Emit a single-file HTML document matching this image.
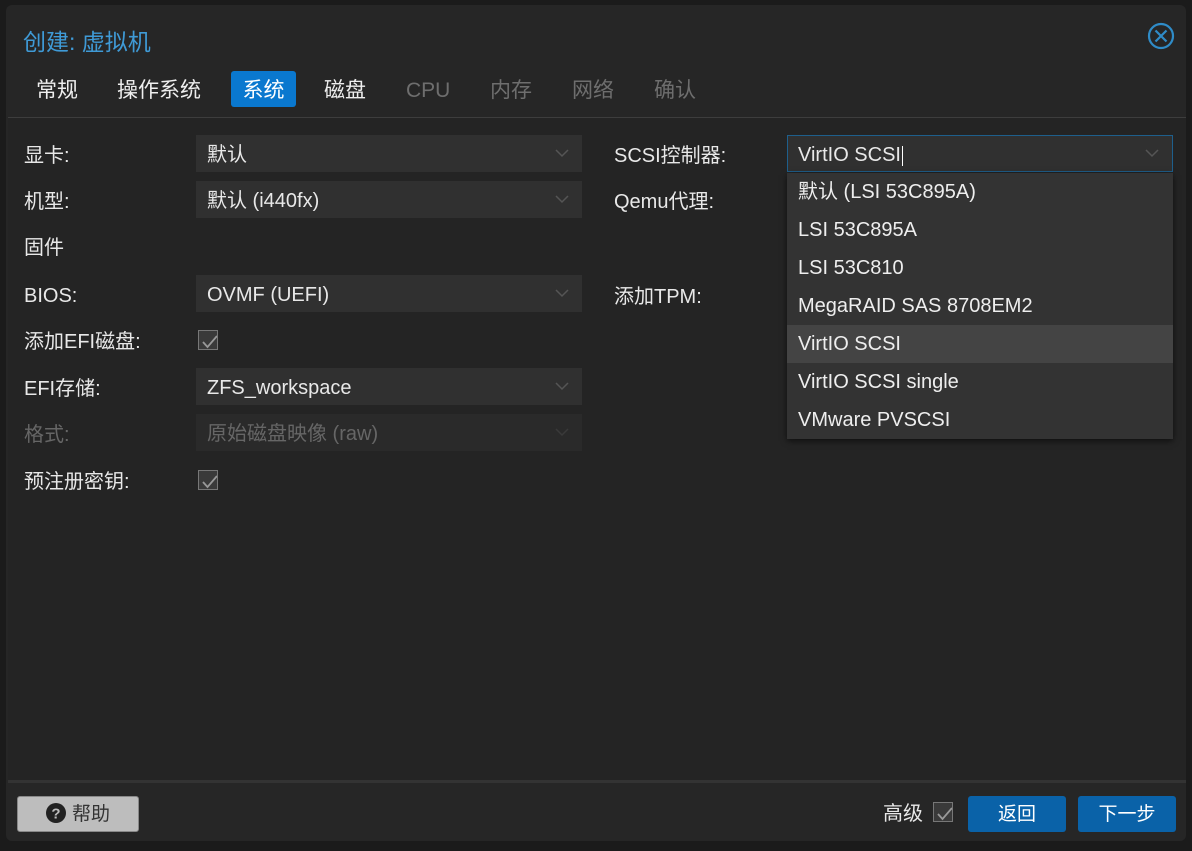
<!DOCTYPE html>
<html><head><meta charset="utf-8"><style>
*{margin:0;padding:0;box-sizing:border-box}
body{width:1192px;height:851px;background:#1b1b1b;font-family:"Liberation Sans","Noto Sans CJK SC",sans-serif;color:#e8e8e8;position:relative;overflow:hidden;font-size:20px}
.dlg{position:absolute;left:6px;top:5px;width:1180px;height:836px;background:#262626;border-radius:6px}
.title{position:absolute;left:17px;top:18px;font-size:23px;color:#3f9ad6}
.close{position:absolute;left:1141px;top:17px}
.tab{position:absolute;top:68px;height:36px;line-height:36px;font-size:21px;color:#eee;padding:0 6px}
.tab.sel{background:#0a78cf;border-radius:3px;color:#fff;top:66px;line-height:40px}
.tab.dis{color:#6e6e6e}
.body{position:absolute;left:2px;top:112px;width:1178px;height:666px;background:#242424;border-top:1px solid #3d3d3d;border-bottom:3px solid #333}
.lbl{position:absolute;font-size:20px;color:#e8e8e8;line-height:24px;top:0}
.inp{position:absolute;height:37px;background:#303030;line-height:40px;padding-left:11px;font-size:20px;color:#e8e8e8}
.inp .ar{position:absolute;right:12px;top:8px}
.chk{position:absolute;width:20px;height:20px;border:1px solid #777;background:#3a3a3a}
.dd{position:absolute;left:787px;top:173px;width:386px;height:266px;background:#333;box-shadow:0 2px 6px rgba(0,0,0,.6)}
.dd div{height:38px;line-height:38px;padding-left:11px;font-size:20px;color:#eee}
.btn{position:absolute;top:796px;height:36px;line-height:36px;text-align:center;font-size:19px;border-radius:3px}
</style></head><body>
<div class="dlg">
<div class="title">创建: 虚拟机</div>
<svg class="close" width="28" height="28" viewBox="0 0 28 28"><circle cx="14" cy="14" r="12" fill="none" stroke="#2f8cc8" stroke-width="2.2"/><path d="M8.5 8.5L19.5 19.5M19.5 8.5L8.5 19.5" stroke="#2f8cc8" stroke-width="2.2"/></svg>
<div class="tab" style="left:24px">常规</div>
<div class="tab" style="left:105px">操作系统</div>
<div class="tab sel" style="left:225px;width:65px;text-align:center">系统</div>
<div class="tab" style="left:312px">磁盘</div>
<div class="tab dis" style="left:394px">CPU</div>
<div class="tab dis" style="left:478px">内存</div>
<div class="tab dis" style="left:560px">网络</div>
<div class="tab dis" style="left:642px">确认</div>
<div class="body"></div>
</div>
<div class="lbl" style="left:24px;top:144px">显卡:</div>
<div class="inp" style="left:196px;top:135px;width:386px">默认<svg class="ar" width="16" height="20"><path d="M2 7l6 6 6-6" fill="none" stroke="#555" stroke-width="1.5"/></svg></div>
<div class="lbl" style="left:24px;top:190px">机型:</div>
<div class="inp" style="left:196px;top:181px;width:386px">默认 (i440fx)<svg class="ar" width="16" height="20"><path d="M2 7l6 6 6-6" fill="none" stroke="#555" stroke-width="1.5"/></svg></div>
<div class="lbl" style="left:24px;top:236px">固件</div>
<div class="lbl" style="left:24px;top:284px">BIOS:</div>
<div class="inp" style="left:196px;top:275px;width:386px">OVMF (UEFI)<svg class="ar" width="16" height="20"><path d="M2 7l6 6 6-6" fill="none" stroke="#555" stroke-width="1.5"/></svg></div>
<div class="lbl" style="left:24px;top:330px">添加EFI磁盘:</div>
<svg class="chk" style="left:198px;top:330px" width="22" height="22"><path d="M4 11l4.5 5L18 5" fill="none" stroke="#999" stroke-width="1.8"/></svg>
<div class="lbl" style="left:24px;top:377px">EFI存储:</div>
<div class="inp" style="left:196px;top:368px;width:386px">ZFS_workspace<svg class="ar" width="16" height="20"><path d="M2 7l6 6 6-6" fill="none" stroke="#555" stroke-width="1.5"/></svg></div>
<div class="lbl" style="left:24px;top:423px;color:#666">格式:</div>
<div class="inp" style="left:196px;top:414px;width:386px;background:#2a2a2a;color:#666">原始磁盘映像 (raw)<svg class="ar" width="16" height="20"><path d="M2 7l6 6 6-6" fill="none" stroke="#3a3a3a" stroke-width="1.5"/></svg></div>
<div class="lbl" style="left:24px;top:470px">预注册密钥:</div>
<svg class="chk" style="left:198px;top:470px" width="22" height="22"><path d="M4 11l4.5 5L18 5" fill="none" stroke="#999" stroke-width="1.8"/></svg>

<div class="lbl" style="left:614px;top:144px">SCSI控制器:</div>
<div class="inp" style="left:787px;top:135px;width:386px;border:1px solid #1e5f8c;line-height:38px;padding-left:10px">VirtIO SCSI<span style="border-left:1.5px solid #fff;margin-left:1px;height:20px;display:inline-block;vertical-align:middle"></span><svg class="ar" width="16" height="20" style="top:7px"><path d="M2 7l6 6 6-6" fill="none" stroke="#555" stroke-width="1.5"/></svg></div>
<div class="lbl" style="left:614px;top:190px">Qemu代理:</div>
<div class="lbl" style="left:614px;top:285px">添加TPM:</div>
<div class="dd">
<div>默认 (LSI 53C895A)</div><div>LSI 53C895A</div><div>LSI 53C810</div><div>MegaRAID SAS 8708EM2</div><div style="background:#444">VirtIO SCSI</div><div>VirtIO SCSI single</div><div>VMware PVSCSI</div>
</div>

<div class="btn" style="left:17px;width:122px;background:#bdbdbd;color:#333;border:1px solid #888">
<svg width="20" height="20" style="vertical-align:-3px;margin-right:6px"><circle cx="10" cy="10" r="10" fill="#222"/><text x="10" y="15.5" font-size="15" font-weight="bold" fill="#bdbdbd" text-anchor="middle" font-family="Liberation Sans">?</text></svg>帮助</div>
<div class="lbl" style="left:883px;top:802px">高级</div>
<svg class="chk" style="left:933px;top:802px" width="22" height="22"><path d="M4 11l4.5 5L18 5" fill="none" stroke="#999" stroke-width="1.8"/></svg>
<div class="btn" style="left:968px;width:98px;background:#0a62a8;color:#fff;line-height:38px">返回</div>
<div class="btn" style="left:1078px;width:98px;background:#0a62a8;color:#fff;line-height:38px">下一步</div>
</body></html>
